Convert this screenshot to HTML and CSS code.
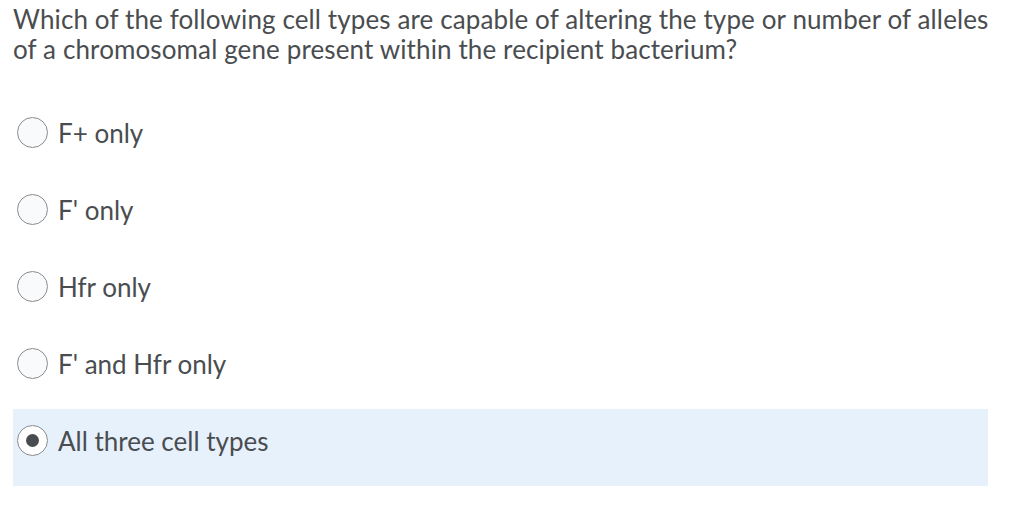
FILE: index.html
```html
<!DOCTYPE html>
<html>
<head>
<meta charset="utf-8">
<link rel="stylesheet" href="styles.css">
</head>
<body>
<div class="quiz">
  <p class="question">Which of the following cell types are capable of altering the type or number of alleles of a chromosomal gene present within the recipient bacterium?</p>
  <div class="options">
    <label class="option"><span class="radio"></span><span class="label">F+ only</span></label>
    <label class="option"><span class="radio"></span><span class="label">F' only</span></label>
    <label class="option"><span class="radio"></span><span class="label">Hfr only</span></label>
    <label class="option"><span class="radio"></span><span class="label">F' and Hfr only</span></label>
    <label class="option selected"><span class="radio"><span class="dot"></span></span><span class="label">All three cell types</span></label>
  </div>
</div>
</body>
</html>
```
FILE: styles.css
```css
html, body {
  margin: 0;
  padding: 0;
  background: #ffffff;
}
body {
  font-family: Lato, "Open Sans", sans-serif;
  font-weight: 400;
  color: #4a4d50;
}
.quiz {
  padding: 4px 13px 0 13px;
}
.question {
  margin: 0;
  width: 990px;
  font-size: 26px;
  line-height: 30px;
  letter-spacing: 0.12px;
}
.options {
  margin-top: 37px;
  width: 975px;
  display: flex;
  flex-direction: column;
}
.option {
  display: flex;
  align-items: center;
  gap: 10px;
  padding: 16px 4px 30px 4px;
  height: 31px;
}
.option.selected {
  background: #e6f1fc;
}
.radio {
  box-sizing: border-box;
  width: 31px;
  height: 31px;
  border-radius: 50%;
  border: 1px solid #8a8c8e;
  background: #f9fafc;
  display: flex;
  align-items: center;
  justify-content: center;
  flex: none;
}
.option.selected .radio {
  background: #ffffff;
}
.dot {
  width: 13px;
  height: 13px;
  border-radius: 50%;
  background: #494c4e;
}
.label {
  font-size: 26px;
  line-height: 30px;
}
```
